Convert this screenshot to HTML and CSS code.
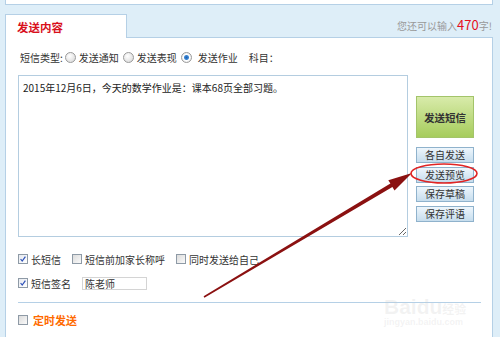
FILE: index.html
```html
<!DOCTYPE html>
<html lang="zh-CN">
<head>
    <meta charset="UTF-8">
    <title>发送内容</title>
    <link rel="stylesheet" href="styles.css">
</head>
<body>
    <div class="top-box"></div>

    <!-- 标签栏 -->
    <div class="tab-bar">
        <div class="tab">发送内容</div>
        <div class="remain">您还可以输入<em>470</em>字!</div>
    </div>

    <div class="panel">
        <div class="type-row">
            <span class="type-label">短信类型:</span>
            <span class="radio"></span><span class="opt">发送通知</span>
            <span class="radio"></span><span class="opt">发送表现</span>
            <span class="radio checked"></span><span class="opt">发送作业</span>
            <span class="subject">科目：</span>
        </div>

        <div class="compose">
            <textarea class="msg">2015年12月6日，今天的数学作业是：课本68页全部习题。</textarea>
            <div class="actions">
                <button class="send-btn">发送短信</button>
                <button class="small-btn">各自发送</button>
                <button class="small-btn">发送预览</button>
                <button class="small-btn">保存草稿</button>
                <button class="small-btn">保存评语</button>
            </div>
        </div>

        <div class="opt-row">
            <span class="check checked"><svg viewBox="0 0 10 10"><path d="M2 5 L4 7.5 L8 2" fill="none" stroke="#2b4fb8" stroke-width="1.5"/></svg></span>
            <span class="check-text">长短信</span>
            <span class="check"></span>
            <span class="check-text">短信前加家长称呼</span>
            <span class="check"></span>
            <span class="check-text">同时发送给自己</span>
        </div>

        <div class="opt-row sign-row">
            <span class="check checked"><svg viewBox="0 0 10 10"><path d="M2 5 L4 7.5 L8 2" fill="none" stroke="#2b4fb8" stroke-width="1.5"/></svg></span>
            <span class="check-text">短信签名</span>
            <input class="sign-input" type="text" value="陈老师">
        </div>

        <div class="divider"></div>

        <div class="opt-row timer-row">
            <span class="check"></span>
            <span class="timer-text">定时发送</span>
        </div>
    </div>

    <!-- 标注箭头 -->
    <svg class="mark" width="500" height="337" viewBox="0 0 500 337">
        <polygon points="203.6,296.3 390.4,183.6 388.3,180.2 412,173 394.5,190.5 392.4,187 204.4,297.7" fill="#8b1111"/>
        <ellipse cx="444" cy="173.5" rx="33" ry="9.5" fill="none" stroke="#e02424" stroke-width="1.6"/>
    </svg>

    <div class="watermark">
        <div class="wm-big">Baidu<span>经验</span></div>
        <div class="wm-small">jingyan.baidu.com</div>
    </div>
</body>
</html>
```

FILE: styles.css
```css
html, body {
    overflow: hidden;
}
body {
    margin: 0;
    width: 500px;
    height: 337px;
    background-color: #deeef8;
    font-family: "Noto Sans CJK SC", "Liberation Sans", sans-serif;
    font-size: 10px;
    color: #333;
    position: relative;
}
.top-box {
    height: 5px;
    margin: 0 7px 0 5px;
    background: white;
    border: 1px solid #b5d0e6;
    border-top: none;
    box-sizing: border-box;
}
.tab-bar {
    display: flex;
    justify-content: space-between;
    align-items: flex-end;
    margin: 9px 8px 0 5px;
}
.tab {
    width: 122px;
    height: 24px;
    box-sizing: border-box;
    background: white;
    border: 1px solid #b5d0e6;
    border-bottom: none;
    margin-bottom: -1px;
    position: relative;
    color: #d8101c;
    font-size: 11.5px;
    font-weight: bold;
    line-height: 24px;
    padding-left: 11px;
}
.remain {
    color: #999;
    font-size: 10px;
    line-height: 16px;
    padding-bottom: 3px;
}
.remain em {
    font-style: normal;
    color: #e60f1e;
    font-size: 13px;
}
.panel {
    background: white;
    border: 1px solid #b5d0e6;
    margin: 0 7px 0 5px;
    padding: 9px 11px 20px 12px;
}
.type-row {
    display: flex;
    align-items: center;
    height: 20px;
    padding-left: 2px;
}
.type-label {
    margin-right: 2px;
}
.radio {
    width: 11px;
    height: 11px;
    box-sizing: border-box;
    border-radius: 50%;
    border: 1px solid #9a9a9a;
    background: radial-gradient(circle at 40% 35%, #fff, #d4d4d4);
    margin-right: 3px;
}
.radio.checked {
    background: radial-gradient(circle, #1f5fb0 0, #3b87d4 2px, #fff 3px, #e8e8e8 5px);
    margin-right: 6px;
}
.opt {
    margin-right: 4px;
}
.subject {
    margin-left: 7px;
}
.compose {
    display: flex;
    margin-top: 8px;
}
.msg {
    width: 390px;
    height: 162px;
    box-sizing: border-box;
    border: 1px solid #b4cde0;
    padding: 4px 4px;
    margin: 0;
    font-family: "Noto Sans CJK SC", "Liberation Sans", sans-serif;
    font-size: 10px;
    color: #222;
    line-height: 16px;
}
.actions {
    display: flex;
    flex-direction: column;
    width: 58px;
    margin-left: 8px;
    padding-top: 21px;
}
button {
    font-family: "Noto Sans CJK SC", "Liberation Sans", sans-serif;
    color: #333;
    padding: 0;
    cursor: pointer;
}
.send-btn {
    height: 42px;
    background: linear-gradient(#d8ebaa, #a6cc5c);
    border: 1px solid #a3c46a;
    font-size: 10.5px;
    font-weight: bold;
    margin-bottom: 9px;
}
.small-btn {
    height: 16px;
    background: linear-gradient(#eef6fc, #c6dded);
    border: 1px solid #8fb2cc;
    font-size: 10px;
    line-height: 14px;
    margin-bottom: 3.5px;
}
.opt-row {
    display: flex;
    align-items: center;
    height: 20px;
    margin-top: 12px;
}
.check {
    width: 10px;
    height: 10px;
    box-sizing: border-box;
    border: 1px solid #8e9aa6;
    background: linear-gradient(135deg, #dcdcdc, #fafafa);
    margin-right: 3px;
    display: flex;
}
.check.checked {
    background: linear-gradient(135deg, #e6eaf0, #ffffff);
}
.check svg {
    width: 8px;
    height: 8px;
}
.check-text {
    margin-right: 11px;
}
.sign-row {
    height: 24px;
    margin-top: 2px;
}
.sign-input {
    width: 65px;
    height: 13px;
    box-sizing: border-box;
    border: 1px solid #d4d4d4;
    padding: 0 2px;
    font-family: "Noto Sans CJK SC", "Liberation Sans", sans-serif;
    font-size: 10px;
    color: #333;
    margin-left: 0;
}
.divider {
    height: 1px;
    background: #b5d0e6;
    margin: 7px 0 0 0;
}
.timer-row {
    margin-top: 7px;
}
.timer-text {
    color: #ff6a00;
    font-size: 11px;
    font-weight: bold;
    margin-left: 2px;
}
.mark {
    position: absolute;
    top: 0;
    left: 0;
    pointer-events: none;
}
.watermark {
    position: absolute;
    left: 384px;
    top: 296px;
    color: rgba(200, 200, 200, 0.22);
    font-family: "Liberation Sans", sans-serif;
    pointer-events: none;
    line-height: 1;
}
.wm-big {
    font-size: 21px;
    font-weight: bold;
}
.wm-big span {
    font-family: "Noto Sans CJK SC", sans-serif;
    font-size: 12px;
}
.wm-small {
    font-size: 9px;
    font-weight: bold;
    margin-top: 1px;
}
```
